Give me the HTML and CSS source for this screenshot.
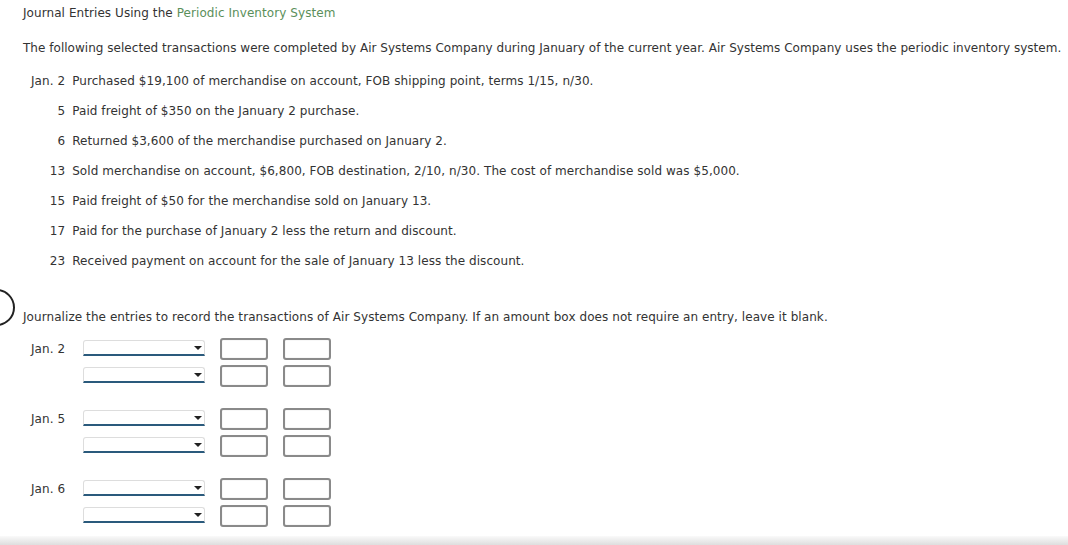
FILE: index.html
```html
<!DOCTYPE html>
<html>
<head>
<meta charset="utf-8">
<link rel="stylesheet" href="styles.css">
</head>
<body>
<div class="page">
  <div class="title">Journal Entries Using the <span class="link">Periodic Inventory System</span></div>
  <p class="intro">The following selected transactions were completed by Air Systems Company during January of the current year. Air Systems Company uses the periodic inventory system.</p>
  <div class="txns">
    <div class="d">Jan. 2</div><div class="t">Purchased $19,100 of merchandise on account, FOB shipping point, terms 1/15, n/30.</div>
    <div class="d">5</div><div class="t">Paid freight of $350 on the January 2 purchase.</div>
    <div class="d">6</div><div class="t">Returned $3,600 of the merchandise purchased on January 2.</div>
    <div class="d">13</div><div class="t">Sold merchandise on account, $6,800, FOB destination, 2/10, n/30. The cost of merchandise sold was $5,000.</div>
    <div class="d">15</div><div class="t">Paid freight of $50 for the merchandise sold on January 13.</div>
    <div class="d">17</div><div class="t">Paid for the purchase of January 2 less the return and discount.</div>
    <div class="d">23</div><div class="t">Received payment on account for the sale of January 13 less the discount.</div>
  </div>
  <div class="instr">
    <div class="circle"></div>
    Journalize the entries to record the transactions of Air Systems Company. If an amount box does not require an entry, leave it blank.
  </div>
  <div class="entries">
    <div class="group">
      <div class="lbl">Jan. 2</div>
      <div class="rows">
        <div class="row"><div class="sel"><span class="arr"></span></div><div class="box"></div><div class="box"></div></div>
        <div class="row"><div class="sel"><span class="arr"></span></div><div class="box"></div><div class="box"></div></div>
      </div>
    </div>
    <div class="group">
      <div class="lbl">Jan. 5</div>
      <div class="rows">
        <div class="row"><div class="sel"><span class="arr"></span></div><div class="box"></div><div class="box"></div></div>
        <div class="row"><div class="sel"><span class="arr"></span></div><div class="box"></div><div class="box"></div></div>
      </div>
    </div>
    <div class="group">
      <div class="lbl">Jan. 6</div>
      <div class="rows">
        <div class="row"><div class="sel"><span class="arr"></span></div><div class="box"></div><div class="box"></div></div>
        <div class="row"><div class="sel"><span class="arr"></span></div><div class="box"></div><div class="box"></div></div>
      </div>
    </div>
  </div>
  <div class="footer"></div>
</div>
</body>
</html>
```
FILE: styles.css
```css
html, body {
  margin: 0;
  padding: 0;
  background: #fff;
  overflow: hidden;
}
.page {
  font-family: "DejaVu Sans", Verdana, sans-serif;
  font-size: 12px;
  line-height: 16px;
  letter-spacing: 0.07px;
  color: #333;
  padding: 5px 0 0 23px;
  position: relative;
}
.title { height: 16px; }
.link { color: #5b8f5b; }
.intro {
  margin: 19px 0 0 0;
  letter-spacing: 0.03px;
  white-space: nowrap;
}
.txns {
  display: grid;
  grid-template-columns: auto 1fr;
  column-gap: 7px;
  margin-top: 10px;
  padding-left: 8px;
}
.txns .d, .txns .t {
  line-height: 30px;
}
.txns .d { text-align: right; }
.instr {
  margin-top: 33px;
  position: relative;
}
.circle {
  position: absolute;
  left: -45px;
  top: -20px;
  width: 33px;
  height: 33px;
  border: 2.5px solid #222;
  border-radius: 50%;
}
.entries {
  margin-top: 13px;
  padding-left: 8px;
  display: flex;
  flex-direction: column;
  gap: 21px;
}
.group { display: flex; }
.lbl {
  width: 52px;
  line-height: 22px;
}
.rows {
  display: flex;
  flex-direction: column;
  gap: 5px;
}
.row {
  display: flex;
  align-items: flex-start;
  gap: 15px;
}
.sel {
  width: 120px;
  height: 13px;
  margin-top: 2px;
  border: 1px solid #ddd;
  border-bottom: 2px solid #2a5a7c;
  border-radius: 3px 3px 0 0;
  position: relative;
  background: #fff;
}
.arr {
  position: absolute;
  right: 2px;
  top: 5px;
  width: 0;
  height: 0;
  border-left: 4px solid transparent;
  border-right: 4px solid transparent;
  border-top: 4px solid #222;
}
.box {
  width: 44px;
  height: 18px;
  border: 2px solid #8a8a8a;
  border-radius: 3px;
  box-shadow: inset 0 0 1px #bbb;
}
.footer {
  margin: 9px 0 0 -23px;
  height: 12px;
  background: linear-gradient(#fafafa, #d4d4d4);
}
```
